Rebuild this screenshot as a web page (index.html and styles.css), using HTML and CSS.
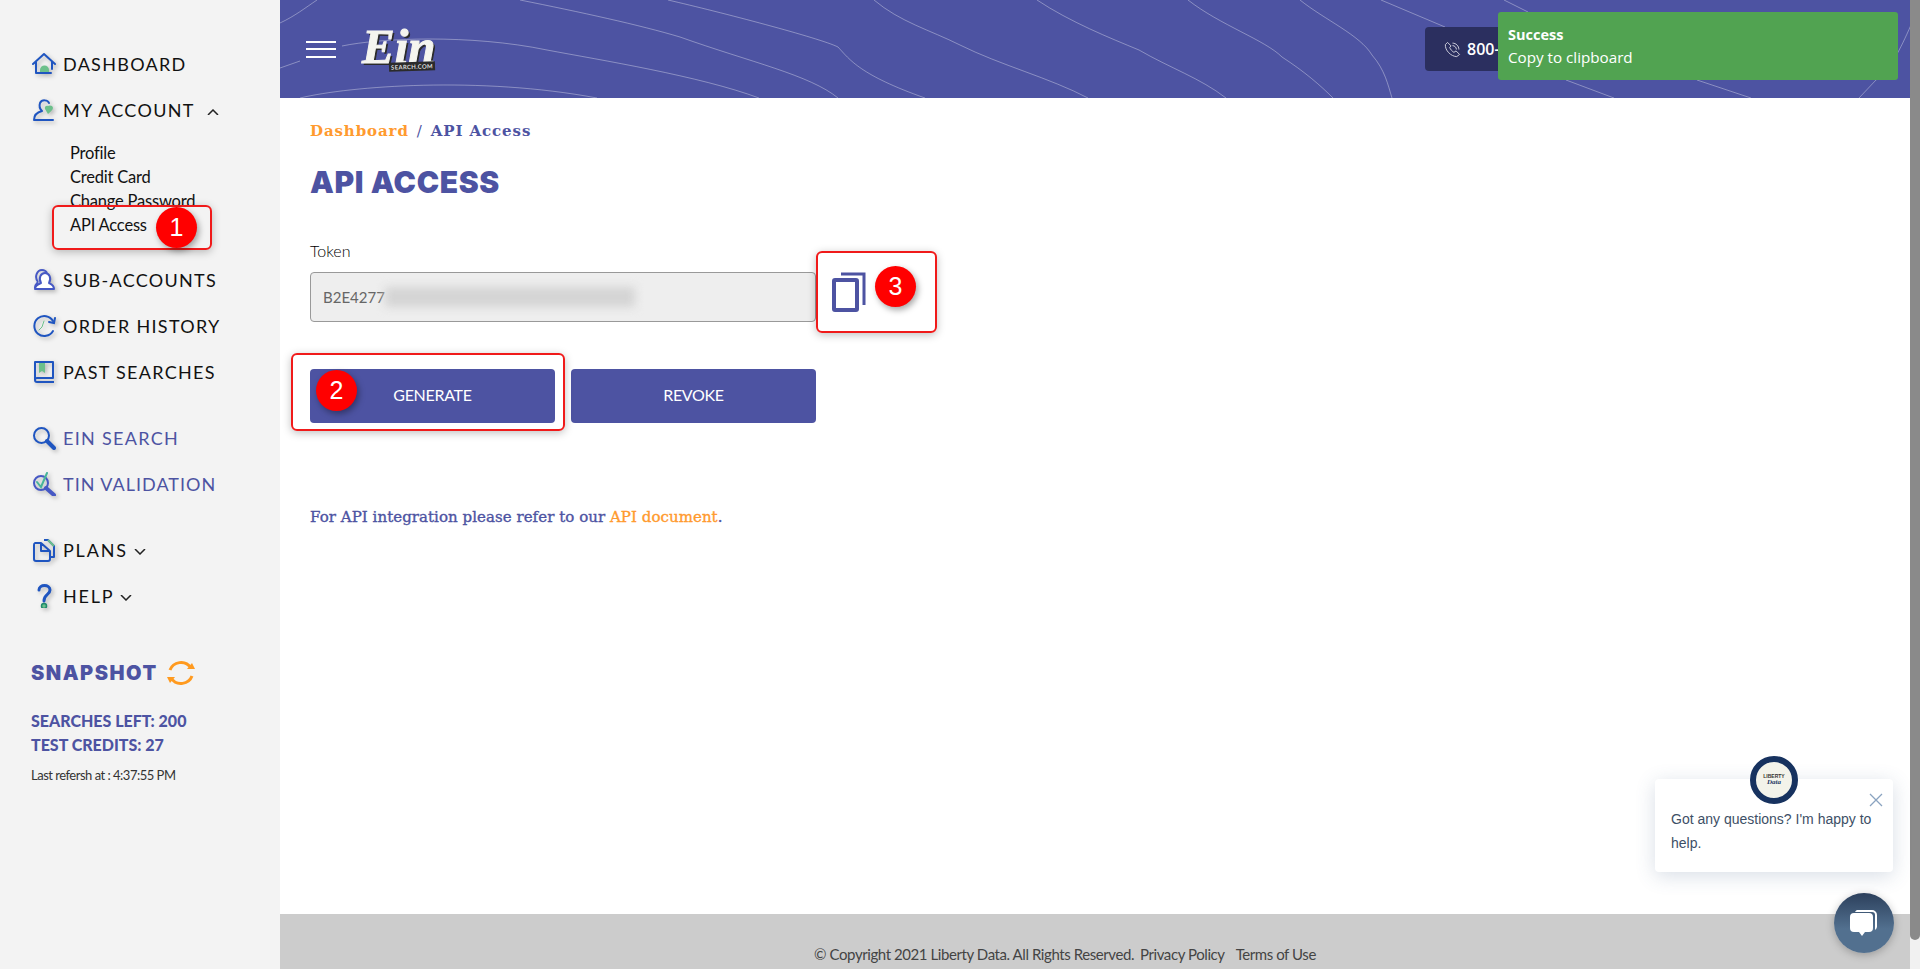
FILE: index.html
```html
<!DOCTYPE html>
<html>
<head>
  <title>EIN Search - API Access</title>
  <link rel="stylesheet" href="styles.css">
</head>
<body>
  <div class="page">
    <aside class="sidebar">
      <ul class="nav">
        <li class="nav-item">
          <svg class="nav-icon" viewBox="0 0 24 24" fill="none" stroke="#1f55c0" stroke-width="2" stroke-linejoin="round" stroke-linecap="round">
            <path d="M8 18a4.500 4.500 0 0 1 9 0v2H8z" fill="#6cc08b" stroke="none"/>
            <path d="M1 12 12 2l11 10M4 10v11h15"/>
            <path d="M20 10v7"/>
          </svg>
          <span>DASHBOARD</span>
        </li>
        <li class="nav-item">
          <svg class="nav-icon" viewBox="0 0 24 24" fill="none" stroke="#1f55c0" stroke-width="2" stroke-linejoin="round" stroke-linecap="round">
            <path d="M17 5c-1-3-7-4-9 0-1 3 0 6 2 8-4 1-8 4-8 9h19"/>
            <path d="M16 16l-3-5c-1-3 2-4 3-3 1-1 5-1 5 2 0 2-3 4-5 6z" fill="#6cc08b" stroke="none"/>
          </svg>
          <span>MY ACCOUNT</span>
          <svg class="chevron" viewBox="0 0 12 6" fill="none" stroke="#222" stroke-width="1.500"><path d="M1 6l5-5 5 5"/></svg>
        </li>
        <li>
          <ul class="subnav">
            <li>Profile</li>
            <li>Credit Card</li>
            <li>Change Password</li>
            <li>API Access</li>
          </ul>
        </li>
        <li class="nav-item">
          <svg class="nav-icon" viewBox="0 0 24 24" fill="none" stroke="#4658c4" stroke-width="2" stroke-linejoin="round">
            <path d="M6 14C2 9 5 2 10 2c2 0 4 1 5 3M3 20c0-3 1-4 3-6"/>
            <path d="M3 21c0-4 4-5 6-6-3-5 0-10 4-10s7 5 4 10c2 1 5 2 5 6z" fill="#fff"/>
          </svg>
          <span>SUB-ACCOUNTS</span>
        </li>
        <li class="nav-item">
          <svg class="nav-icon" viewBox="0 0 24 24" fill="none" stroke="#1f55c0" stroke-width="2" stroke-linecap="round">
            <path d="M21 7A10 10 0 1 0 21 17"/>
            <path d="M17 8l5 1 1-5"/>
            <path d="M12 7l-2 6-3 3" stroke="#6cc08b" stroke-width="1"/>
          </svg>
          <span>ORDER HISTORY</span>
        </li>
        <li class="nav-item">
          <svg class="nav-icon" viewBox="0 0 24 24" fill="none" stroke="#1f55c0" stroke-width="2" stroke-linejoin="round">
            <path d="M7 3v10l3-2 3 2V3z" fill="#6cc08b" stroke="none"/>
            <path d="M3 20V2h18v16H5a2 2 0 0 0-2 2 2 2 0 0 0 2 2h17"/>
          </svg>
          <span>PAST SEARCHES</span>
        </li>
        <li class="nav-item nav-link group-start">
          <svg class="nav-icon" viewBox="0 0 24 24" fill="none" stroke="#1f55c0" stroke-width="2" stroke-linecap="round">
            <circle cx="9.500" cy="9.500" r="7.500"/>
            <path d="M15 15l7 7" stroke-width="4"/>
          </svg>
          <span>EIN SEARCH</span>
        </li>
        <li class="nav-item nav-link">
          <svg class="nav-icon" viewBox="0 0 24 24" fill="none" stroke="#4658c4" stroke-width="2" stroke-linecap="round">
            <circle cx="9" cy="11" r="7"/>
            <path d="M14 16l8 7" stroke-width="4"/>
            <path d="M5 10l4 5 6-14" stroke="#48b59a"/>
          </svg>
          <span class="tight">TIN VALIDATION</span>
        </li>
        <li class="nav-item group-start">
          <svg class="nav-icon" viewBox="0 0 24 24" fill="none" stroke="#1f55c0" stroke-width="2" stroke-linejoin="round">
            <path d="M9 5H3a2 2 0 0 0-1 2v14a2 2 0 0 0 2 2h12a2 2 0 0 0 2-2V13"/>
            <path d="M9 5l9 8h-9z"/>
            <path d="M12 2h4l6 6v11h-4"/>
            <path d="M16 2l6 6" stroke="#6cc08b"/>
          </svg>
          <span class="wide">PLANS</span>
          <svg class="chevron chevron-down" viewBox="0 0 12 6" fill="none" stroke="#222" stroke-width="1.500"><path d="M1 0l5 5 5-5"/></svg>
        </li>
        <li class="nav-item">
          <svg class="nav-icon" viewBox="0 0 24 24" fill="none" stroke="#1f55c0" stroke-width="3" stroke-linecap="round">
            <path d="M7 6c0-6 11-6 11 0 0 5-6 4-6 11"/>
            <circle cx="12" cy="22" r="2.500" fill="#6cc08b" stroke="#1f8a6c" stroke-width="1.500"/>
          </svg>
          <span class="wide">HELP</span>
          <svg class="chevron chevron-down" viewBox="0 0 12 6" fill="none" stroke="#222" stroke-width="1.500"><path d="M1 0l5 5 5-5"/></svg>
        </li>
      </ul>

      <div class="snapshot">
        <div class="snapshot-title">
          <span>SNAPSHOT</span>
          <svg class="refresh" viewBox="0 0 30 26" fill="none" stroke="#ff9a1f" stroke-width="3">
            <path d="M4 10C7 2 19-1 25 8"/>
            <path d="M21 9h8l-3-6z" fill="#ff9a1f" stroke="none"/>
            <path d="M26 16c-3 8-15 11-21 2"/>
            <path d="M9 17H1l3 6z" fill="#ff9a1f" stroke="none"/>
          </svg>
        </div>
        <p class="stat">SEARCHES LEFT: 200</p>
        <p class="stat">TEST CREDITS: 27</p>
        <p class="refresh-time">Last refersh at : 4:37:55 PM</p>
      </div>
    </aside>

    <div class="main">
      <header class="topbar">
        <svg class="contours" viewBox="0 0 1630 98" fill="none" stroke="#fff" stroke-opacity="0.35" stroke-width="1">
          <path d="M0 23C15 16 25 8 37 0M0 68L20 61"/>
          <path d="M62 46C100 38 190 34 267 50 320 60 420 76 479 98"/>
          <path d="M20 98C70 86 200 76 317 98"/>
          <path d="M240 0C300 12 360 25 400 37 470 62 530 75 558 98"/>
          <path d="M388 0C440 12 540 38 558 47 570 60 580 75 645 98"/>
          <path d="M594 0C620 22 650 30 680 45 720 65 770 78 808 98"/>
          <path d="M757 0C790 22 830 38 859 50 890 68 920 78 946 98"/>
          <path d="M908 0C940 25 985 40 1002 57 1025 72 1040 85 1053 98"/>
          <path d="M1020 0C1045 20 1080 35 1092 55 1105 70 1108 85 1112 98"/>
          <path d="M1101 0L1165 27M1224 0L1248 12"/>
          <path d="M1286 80L1334 98M1417 80L1471 98"/>
          <path d="M1631 25C1620 50 1610 70 1596 80L1579 98"/>
        </svg>
        <div class="hamburger"><i></i><i></i><i></i></div>
        <div class="logo">
          <span class="logo-script">Ein</span>
          <span class="logo-tag">SEARCH.COM</span>
        </div>
        <div class="phone">
          <svg class="phone-icon" viewBox="0 0 24 24" fill="none" stroke="#d8d8e4" stroke-width="1.300" stroke-linejoin="round">
            <path d="M5 2L2 5c-1 8 8 17 16 17l4-3-5-5-3 2c-2-1-5-4-6-7l2-2z"/>
            <path d="M12 3c5 0 9 4 9 9M12 6.500c3 0 5.500 2.500 5.500 5.500"/>
          </svg>
          <span>800-</span>
        </div>
      </header>

      <main class="content">
        <div class="breadcrumb">
          <span class="crumb-link">Dashboard</span>
          <span class="crumb-sep">/</span>
          <span>API Access</span>
        </div>
        <h1 class="title">API ACCESS</h1>

        <label class="field-label">Token</label>
        <div class="token-row">
          <div class="token-input">B2E4277<span class="token-blur"></span></div>
          <svg class="copy-icon" viewBox="0 0 34 40" fill="none" stroke="#4d53a2" stroke-width="4">
            <rect x="2" y="8" width="23" height="30" rx="1"/>
            <path d="M9 2h23v31" stroke-width="3"/>
          </svg>
        </div>

        <div class="button-row">
          <button class="btn">GENERATE</button>
          <button class="btn">REVOKE</button>
        </div>

        <p class="note">For API integration please refer to our <span class="note-link">API document</span>.</p>
      </main>

      <footer class="footer">
        <span>© Copyright 2021 Liberty Data. All Rights Reserved.</span>
        <span>Privacy Policy</span>
        <span class="footer-terms">Terms of Use</span>
      </footer>
    </div>

    <div class="scrollbar"><div class="scrollbar-thumb"></div></div>
  </div>

  <!-- annotations drawn over the screenshot -->
  <div class="mark mark-api"></div>
  <div class="badge badge-1">1</div>
  <div class="mark mark-generate"></div>
  <div class="badge badge-2">2</div>
  <div class="mark mark-copy"></div>
  <div class="badge badge-3">3</div>

  <div class="toast">
    <div class="toast-title">Success</div>
    <div>Copy to clipboard</div>
  </div>

  <div class="chat-card">
    <div class="chat-avatar">
      <span class="avatar-top">LIBERTY</span>
      <span class="avatar-sub">Data</span>
    </div>
    <svg class="chat-close" viewBox="0 0 14 14" fill="none" stroke="#8aa3c0" stroke-width="1.300"><path d="M1 1l12 12M13 1L1 13"/></svg>
    <p>Got any questions? I'm happy to help.</p>
  </div>
  <div class="chat-button">
    <svg viewBox="0 0 32 32" width="32" height="32">
      <path d="M9 3h15a5 5 0 0 1 5 5v12a5 5 0 0 1-2 3V8a3 3 0 0 0-3-3H7a5 5 0 0 1 2-2z" fill="#fff"/>
      <path d="M6 6h15a4 4 0 0 1 4 4v11a4 4 0 0 1-4 4h-4l-3 4-3-4H6a4 4 0 0 1-4-4V10a4 4 0 0 1 4-4z" fill="#fff"/>
    </svg>
  </div>
</body>
</html>
```

FILE: styles.css
```css
* {
  box-sizing: border-box;
}

html, body {
  margin: 0;
  height: 969px;
  overflow: hidden;
}

body {
  font-family: Lato, sans-serif;
  color: #111;
  background: #fff;
}

ul {
  list-style: none;
  margin: 0;
  padding: 0;
}

p {
  margin: 0;
}

.page {
  display: flex;
  height: 969px;
}

/* sidebar */
.sidebar {
  width: 280px;
  flex: none;
  padding: 41px 0 0 32px;
  background-color: #f3f3f3;
}

.nav-item {
  display: flex;
  align-items: center;
  height: 46px;
  font-size: 18px;
  letter-spacing: 1.300px;
  color: #111;
}

.nav-icon {
  width: 24px;
  height: 24px;
  margin-right: 7px;
  flex: none;
  filter: drop-shadow(2px 2px 2px rgba(0, 0, 0, 0.25));
}

.nav-link {
  color: #4d53a2;
}

.group-start {
  margin-top: 20px;
}

.wide {
  letter-spacing: 1.800px;
}

.tight {
  letter-spacing: 1px;
}

.chevron {
  width: 12px;
  height: 6px;
  margin: 4px 0 0 12px;
}

.chevron-down {
  margin-left: 6px;
}

.subnav {
  margin: 9px 0 19px 38px;
  font-size: 16.500px;
  line-height: 23.900px;
  letter-spacing: -0.2px;
}

.snapshot {
  margin: 42px 0 0 -1px;
}

.snapshot-title {
  display: flex;
  align-items: center;
  height: 24px;
  font-family: Inter, sans-serif;
  font-size: 20px;
  font-weight: 900;
  letter-spacing: 1.500px;
  color: #4d53a2;
}

.refresh {
  width: 30px;
  height: 26px;
  margin-left: 8px;
}

.stat {
  font-size: 16px;
  font-weight: 900;
  line-height: 24px;
  color: #4d53a2;
}

.snapshot-title + .stat {
  margin-top: 24px;
}

.refresh-time {
  margin-top: 9px;
  font-size: 13px;
  line-height: 18px;
  letter-spacing: -0.5px;
  color: #333;
}

/* main column */
.main {
  flex: 1;
  display: flex;
  flex-direction: column;
  min-width: 0;
}

.topbar {
  position: relative;
  display: flex;
  align-items: center;
  height: 98px;
  flex: none;
  padding-left: 26px;
  background-color: #4d53a2;
  overflow: hidden;
}

.contours {
  position: absolute;
  left: 0;
  top: 0;
  width: 1630px;
  height: 98px;
}

.hamburger {
  position: relative;
  width: 30px;
  margin-right: 26px;
}

.hamburger i {
  display: block;
  height: 2px;
  margin: 5.500px 0;
  background-color: #fff;
}

.logo {
  position: relative;
  width: 72px;
  height: 46px;
}

.logo-script {
  display: block;
  font-family: "Liberation Serif", serif;
  font-size: 49px;
  font-weight: 700;
  font-style: italic;
  line-height: 42px;
  color: #f5f5ef;
  -webkit-text-stroke: 1px #f5f5ef;
  text-shadow: 2px 2px 0 #2b2b2b;
}

.logo-tag {
  position: absolute;
  left: 27px;
  top: 36px;
  padding: 1px 2px;
  font-size: 6px;
  font-weight: 700;
  line-height: 7px;
  letter-spacing: 0.3px;
  color: #ddd;
  background-color: #2b2b2b;
  transform: rotate(-2deg);
}

.phone {
  position: relative;
  display: flex;
  align-items: center;
  height: 44px;
  width: 200px;
  margin-left: auto;
  margin-right: 285px;
  padding-left: 19px;
  border-radius: 4px;
  font-family: "Open Sans", sans-serif;
  font-size: 16px;
  font-weight: 600;
  color: #fff;
  background-color: #2b2f5f;
}

.phone-icon {
  width: 17px;
  height: 17px;
  margin-right: 6px;
}

.content {
  flex: 1;
  padding: 22px 0 0 30px;
}

.breadcrumb {
  display: flex;
  gap: 8px;
  font-family: "DejaVu Serif", serif;
  font-size: 15px;
  font-weight: 700;
  line-height: 22px;
  letter-spacing: 0.9px;
  color: #4d53a2;
}

.crumb-link {
  color: #ff9a2e;
}

.crumb-sep {
  font-weight: 400;
}

.title {
  margin: 22px 0 0;
  font-family: Inter, sans-serif;
  font-size: 30px;
  font-weight: 900;
  line-height: 36px;
  letter-spacing: 0.6px;
  color: #4d53a2;
}

.field-label {
  display: block;
  margin-top: 41px;
  font-size: 16px;
  font-weight: 300;
  line-height: 20px;
  color: #000;
}

.token-row {
  display: flex;
  align-items: flex-start;
  margin-top: 11px;
}

.token-input {
  display: flex;
  align-items: center;
  width: 506px;
  height: 50px;
  padding-left: 12px;
  border: 1px solid #999;
  border-radius: 4px;
  font-size: 15px;
  color: #666;
  background-color: #eee;
}

.token-blur {
  width: 250px;
  height: 20px;
  background-color: #d4d4d4;
  filter: blur(5px);
}

.copy-icon {
  width: 34px;
  height: 40px;
  margin-left: 16px;
}

.button-row {
  display: flex;
  gap: 16px;
  margin-top: 47px;
}

.btn {
  width: 245px;
  height: 54px;
  padding-bottom: 5px;
  border: 0;
  border-radius: 4px;
  font-family: Lato, sans-serif;
  font-size: 16px;
  letter-spacing: -0.3px;
  color: #fff;
  background-color: #4d53a2;
}

.note {
  margin-top: 84px;
  font-family: "DejaVu Serif", serif;
  font-size: 15px;
  line-height: 20px;
  letter-spacing: 0.05px;
  -webkit-text-stroke: 0.35px;
  color: #4d53a2;
}

.note-link {
  color: #ff9a2e;
}

.footer {
  display: flex;
  justify-content: center;
  gap: 6px;
  height: 55px;
  flex: none;
  padding: 30px 60px 0 0;
  font-size: 15px;
  line-height: 20px;
  letter-spacing: -0.42px;
  color: #444;
  background-color: #ccc;
}

.footer-terms {
  margin-left: 5px;
}

.scrollbar {
  width: 10px;
  flex: none;
  background-color: #f1f1f1;
}

.scrollbar-thumb {
  height: 940px;
  border-radius: 0 0 5px 5px;
  background-color: #8a8a8a;
}

/* annotations */
.mark {
  position: absolute;
  border: 2px solid #f01a1a;
  border-radius: 6px;
  box-shadow: 0 2px 8px rgba(0, 0, 0, 0.25);
}

.mark-api {
  left: 52px;
  top: 205px;
  width: 160px;
  height: 45px;
}

.mark-generate {
  left: 291px;
  top: 353px;
  width: 274px;
  height: 78px;
}

.mark-copy {
  left: 816px;
  top: 251px;
  width: 121px;
  height: 82px;
}

.badge {
  position: absolute;
  width: 41px;
  height: 41px;
  border-radius: 50%;
  font-family: "Liberation Sans", sans-serif;
  font-size: 25px;
  line-height: 41px;
  text-align: center;
  color: #fff;
  background-color: #f00;
  box-shadow: 2px 3px 6px rgba(0, 0, 0, 0.35);
}

.badge-1 {
  left: 156px;
  top: 207px;
}

.badge-2 {
  left: 316px;
  top: 370px;
}

.badge-3 {
  left: 875px;
  top: 266px;
}

/* toast */
.toast {
  position: absolute;
  left: 1498px;
  top: 12px;
  width: 400px;
  height: 68px;
  padding: 11px 10px;
  border-radius: 3px;
  font-family: "Open Sans", sans-serif;
  font-size: 15.200px;
  line-height: 23px;
  color: #fff;
  background-color: #51a351;
}

.toast-title {
  font-size: 14.500px;
  font-weight: 700;
}

/* chat widget */
.chat-card {
  position: absolute;
  left: 1655px;
  top: 779px;
  width: 238px;
  height: 93px;
  padding: 28px 16px 0;
  border-radius: 4px;
  font-family: "Liberation Sans", sans-serif;
  font-size: 14px;
  line-height: 24px;
  color: #3d4f66;
  background-color: #fff;
  box-shadow: 0 4px 20px rgba(60, 90, 130, 0.2);
}

.chat-avatar {
  position: absolute;
  left: 95px;
  top: -23px;
  width: 48px;
  height: 48px;
  padding-top: 11px;
  border: 6px solid #17325f;
  border-radius: 50%;
  text-align: center;
  background-color: #f3f3ea;
}

.avatar-top {
  display: block;
  font-size: 5px;
  font-weight: 700;
  line-height: 6px;
  color: #333;
}

.avatar-sub {
  display: block;
  font-family: "Liberation Serif", serif;
  font-size: 7px;
  font-style: italic;
  font-weight: 700;
  line-height: 7px;
  color: #17325f;
}

.chat-close {
  position: absolute;
  right: 10px;
  top: 14px;
  width: 14px;
  height: 14px;
}

.chat-button {
  position: absolute;
  left: 1834px;
  top: 893px;
  display: flex;
  align-items: center;
  justify-content: center;
  width: 60px;
  height: 60px;
  border-radius: 50%;
  background: linear-gradient(#2c405c, #52708f 60%);
  box-shadow: 0 2px 8px rgba(0, 0, 0, 0.25);
}
```
